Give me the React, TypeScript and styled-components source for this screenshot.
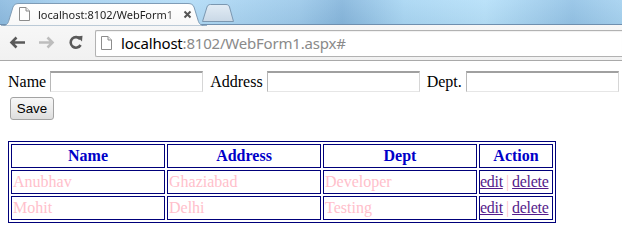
import React from "react";
import styled, { createGlobalStyle } from "styled-components";

const Global = createGlobalStyle`
  html, body { margin: 0; padding: 0; background: #fff; }
  #root { width: 622px; height: 234px; overflow: hidden; }
`;

const Frame = styled.div`
  width: 622px;
  height: 234px;
  overflow: hidden;
  display: flex;
  flex-direction: column;
  background: #fff;
`;

const TabStrip = styled.div`
  height: 25px;
  flex: none;
  display: flex;
  align-items: flex-end;
  padding-left: 1px;
  box-sizing: border-box;
  background:
    linear-gradient(180deg, rgba(255,255,255,0.08), rgba(0,0,0,0.03)),
    linear-gradient(90deg, #8dbbe0 0%, #a4cfee 10%, #b3dcf7 30%, #9cc9ea 48%, #86b6dc 55%, #a9d6f3 65%, #b6e0f9 78%, #94c3e6 92%, #a6d2f0 100%);
  box-shadow: inset 0 -1px 0 #6f8fae;
`;

const Tab = styled.div`
  position: relative;
  z-index: 1;
  width: 206px;
  height: 22px;
  flex: none;
  display: flex;
  align-items: center;
  padding: 0 0 0 18px;
  box-sizing: border-box;
`;

const TabShape = styled.svg`
  position: absolute;
  left: 0;
  top: 0;
  z-index: -1;
`;

const TabTitle = styled.span`
  font-family: "Noto Sans", "DejaVu Sans", sans-serif;
  font-size: 11px;
  color: #1e1e1e;
  margin-left: 8px;
  width: 139px;
  white-space: nowrap;
  overflow: hidden;
  -webkit-mask-image: linear-gradient(90deg, #000 92%, rgba(0,0,0,0.25) 100%);
  mask-image: linear-gradient(90deg, #000 92%, rgba(0,0,0,0.25) 100%);
`;

const CloseBox = styled.span`
  display: flex;
  margin-left: 6px;
`;

const NewTab = styled.svg`
  flex: none;
  margin-left: -5px;
  margin-bottom: 3px;
`;

const Toolbar = styled.div`
  height: 36px;
  flex: none;
  box-sizing: border-box;
  display: flex;
  align-items: center;
  padding: 0 0 0 9px;
  background: linear-gradient(180deg, #f7f7f7 0%, #f1f1f1 100%);
  border-bottom: 1px solid #a9a9a9;
`;

const NavButton = styled.span<{ $gap: number }>`
  display: flex;
  margin-right: ${(p) => p.$gap}px;
`;

const Omnibox = styled.div`
  flex: 1;
  height: 27px;
  margin-top: 1px;
  box-sizing: border-box;
  display: flex;
  align-items: center;
  padding-left: 5px;
  background: #fff;
  border: 1px solid #b2b2b2;
  border-right: none;
  border-radius: 2px 0 0 2px;
  box-shadow: inset 0 1px 1px rgba(0,0,0,0.06);
`;

const UrlText = styled.span`
  font-family: "Noto Sans", "DejaVu Sans", sans-serif;
  font-size: 15px;
  margin-left: 9px;
  color: #8a8a8a;
  white-space: nowrap;
  letter-spacing: -0.2px;
`;

const Host = styled.span`
  color: #000;
`;

const Page = styled.div`
  padding: 8px;
  font-family: "Liberation Serif", "Times New Roman", serif;
  font-size: 16px;
  color: #000;
`;

const FormRow = styled.div`
  display: flex;
  align-items: center;
  height: 25px;
`;

const Label = styled.span`
  white-space: nowrap;
`;

const TextInput = styled.input`
  width: 153px;
  height: 21px;
  box-sizing: border-box;
  margin: 0 7px 0 4px;
  padding: 1px 2px;
  background: #fff;
  border-style: solid;
  border-width: 2px 1px 1px 1px;
  border-color: #a0a0a0 #d6d6d6 #e6e6e6 #b8b8b8;
  font-family: "Liberation Sans", Arial, sans-serif;
  font-size: 13px;
  outline: none;
`;

const ButtonRow = styled.div`
  display: flex;
  padding: 3px 0 0 2px;
`;

const SaveButton = styled.button`
  width: 44px;
  height: 23px;
  box-sizing: border-box;
  padding: 0;
  border: 1px solid #a3a3a3;
  border-radius: 3px;
  background: linear-gradient(180deg, #f7f7f7 0%, #ececec 50%, #dddddd 100%);
  font-family: "Liberation Sans", Arial, sans-serif;
  font-size: 13.33px;
  color: #000;
`;

const Grid = styled.table`
  margin-top: 21px;
  border: 1px solid #00007a;
  border-spacing: 2px;
  border-collapse: separate;
  table-layout: fixed;
`;

const HeadCell = styled.th<{ $w: number }>`
  width: ${(p) => p.$w}px;
  height: 24px;
  box-sizing: border-box;
  padding: 1px;
  border: 1px solid #00007a;
  color: #0000c8;
  font-weight: bold;
  text-align: center;
  line-height: 20px;
`;

const Cell = styled.td<{ $w: number }>`
  width: ${(p) => p.$w}px;
  height: 24px;
  box-sizing: border-box;
  padding: 1px;
  border: 1px solid #00007a;
  color: #ffc0cb;
  line-height: 20px;
  white-space: nowrap;
  overflow: hidden;
`;

const ActionCell = styled(Cell)`
  padding: 1px 0 1px 0;
  letter-spacing: -0.3px;
  word-spacing: -0.5px;
`;

const Link = styled.a`
  color: #551a8b;
  text-decoration: underline;
`;

const PageIcon = () => (
  <svg width="11" height="14" viewBox="0 0 11 14">
    <path d="M0.5 0.5 H7 L10.5 4 V13.5 H0.5 Z" fill="#fff" stroke="#8c8c8c" />
    <path d="M7 0.5 V4 H10.5" fill="#f0f0f0" stroke="#8c8c8c" />
  </svg>
);

const rows = [
  { name: "Anubhav", address: "Ghaziabad", dept: "Developer" },
  { name: "Mohit", address: "Delhi", dept: "Testing" },
];

export default function App() {
  return (
    <Frame>
      <Global />
      <TabStrip>
        <Tab>
          <TabShape width="206" height="23" viewBox="0 0 206 23">
            <defs>
              <linearGradient id="tabg" x1="0" y1="0" x2="0" y2="1">
                <stop offset="0" stopColor="#ffffff" />
                <stop offset="1" stopColor="#f7f7f7" />
              </linearGradient>
            </defs>
            <path
              d="M0 23 C5 23 7 21 8 17 L12 4 C13 1.5 15 0.5 18 0.5 L187 0.5 C190 0.5 192 1.5 193 4 L197 17 C198 21 200 23 206 23 Z"
              fill="url(#tabg)"
              stroke="#7f9cb6"
              strokeWidth="1"
            />
          </TabShape>
          <PageIcon />
          <TabTitle>localhost:8102/WebForm1</TabTitle>
          <CloseBox>
            <svg width="9" height="9" viewBox="0 0 9 9">
              <path d="M1.5 1.5 L7.5 7.5 M7.5 1.5 L1.5 7.5" stroke="#555" strokeWidth="2" />
            </svg>
          </CloseBox>
        </Tab>
        <NewTab width="32" height="18" viewBox="0 0 32 18">
          <defs>
            <linearGradient id="ntg" x1="0" y1="0" x2="0" y2="1">
              <stop offset="0" stopColor="#e2ecf5" />
              <stop offset="1" stopColor="#c9d8e6" />
            </linearGradient>
          </defs>
          <path
            d="M0.5 17.5 L5 3 C5.5 1.5 6.5 0.5 8.5 0.5 L24 0.5 C26 0.5 27 1.5 27.5 3 L31.5 17.5 Z"
            fill="url(#ntg)"
            stroke="#7b97b0"
          />
        </NewTab>
      </TabStrip>
      <Toolbar>
        <NavButton $gap={12}>
          <svg width="17" height="13" viewBox="0 0 17 13">
            <path d="M16 6.5 H3 M7.5 1.5 L2.5 6.5 L7.5 11.5" fill="none" stroke="#5a5a5a" strokeWidth="2.6" />
          </svg>
        </NavButton>
        <NavButton $gap={13}>
          <svg width="17" height="13" viewBox="0 0 17 13">
            <path d="M1 6.5 H14 M9.5 1.5 L14.5 6.5 L9.5 11.5" fill="none" stroke="#bdbdbd" strokeWidth="2.6" />
          </svg>
        </NavButton>
        <NavButton $gap={11}>
          <svg width="16" height="15" viewBox="0 0 16 15">
            <path d="M12.2 4.2 A5.3 5.3 0 1 0 12.6 10" fill="none" stroke="#5a5a5a" strokeWidth="2.6" />
            <path d="M9 1.5 L14.5 0.8 L14 6.5 Z" fill="#5a5a5a" />
          </svg>
        </NavButton>
        <Omnibox>
          <PageIcon />
          <UrlText>
            <Host>localhost</Host>:8102/WebForm1.aspx#
          </UrlText>
        </Omnibox>
      </Toolbar>
      <Page>
        <FormRow>
          <Label>Name</Label>
          <TextInput type="text" />
          <Label>Address</Label>
          <TextInput type="text" />
          <Label>Dept.</Label>
          <TextInput type="text" />
        </FormRow>
        <ButtonRow>
          <SaveButton type="button">Save</SaveButton>
        </ButtonRow>
        <Grid>
          <thead>
            <tr>
              <HeadCell $w={154}>Name</HeadCell>
              <HeadCell $w={154}>Address</HeadCell>
              <HeadCell $w={154}>Dept</HeadCell>
              <HeadCell $w={74}>Action</HeadCell>
            </tr>
          </thead>
          <tbody>
            {rows.map((r) => (
              <tr key={r.name}>
                <Cell $w={154}>{r.name}</Cell>
                <Cell $w={154}>{r.address}</Cell>
                <Cell $w={154}>{r.dept}</Cell>
                <ActionCell $w={74}>
                  <Link href="#">edit</Link> | <Link href="#">delete</Link>
                </ActionCell>
              </tr>
            ))}
          </tbody>
        </Grid>
      </Page>
    </Frame>
  );
}
